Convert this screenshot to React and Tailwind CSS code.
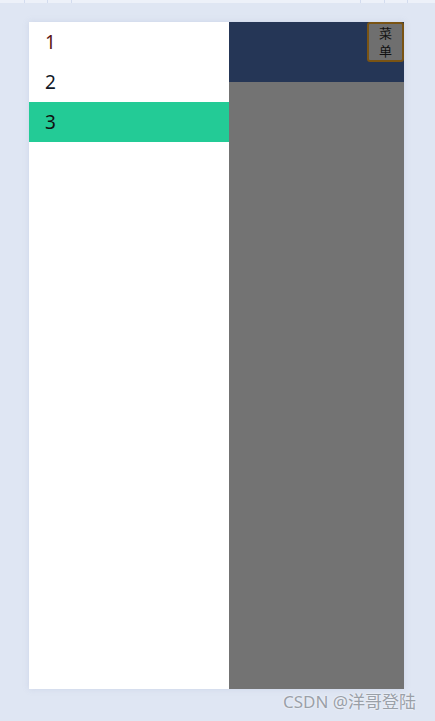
import React, { useState } from 'react';

const items = [
    { id: 1, label: '1', color: 'text-[#5c1414]' },
    { id: 2, label: '2', color: 'text-[#111827]' },
    { id: 3, label: '3', color: 'text-[#111111]' },
];

const App = () => {
    const [active, setActive] = useState(3);

    return (
        <div className="relative min-h-[721px] w-full bg-[#dfe6f3] font-['Noto_Sans','Noto_Sans_CJK_SC',sans-serif]">
            {/* top strip */}
            <div className="flex h-[3px] bg-[#edf1f9]">
                <div className="w-[25px] border-r border-[#d3dcef]" />
                <div className="w-[23px] border-r border-[#d3dcef]" />
                <div className="w-[24px] border-r border-[#d3dcef]" />
                <div className="flex-1 border-r border-[#d3dcef]" />
                <div className="w-[24px] border-r border-[#d3dcef]" />
                <div className="w-[23px] border-r border-[#d3dcef]" />
                <div className="w-[27px]" />
            </div>

            <div className="pl-[29px] pt-[19px]">
                <div className="flex h-[667px] w-[375px] shadow-[0_0_6px_rgba(150,165,200,0.25)]">
                    <div className="w-[200px] bg-white">
                        {items.map(item => (
                            <div
                                key={item.id}
                                onClick={() => setActive(item.id)}
                                className={`flex h-[40px] items-center pl-[16px] text-[19px] ${item.color} ${active === item.id ? 'bg-[#23cb96]' : ''}`}
                            >
                                {item.label}
                            </div>
                        ))}
                    </div>
                    <div className="flex w-[175px] flex-col">
                        <div className="flex h-[60px] justify-end bg-[#253656]">
                            <button className="flex h-[40px] w-[37px] flex-col items-center justify-center rounded-[3px] border-2 border-[#7a5414] bg-[#6f6f6f] text-[13px] leading-[18px] text-[#111]">
                                <span className="block h-[18px]">菜</span>
                                <span className="block h-[18px]">单</span>
                            </button>
                        </div>
                        <div className="flex-1 bg-[#737373]" />
                    </div>
                </div>
            </div>

            <div className="absolute left-[283px] top-[690px] text-[17px] leading-[24px] text-[#9aa0a8] [text-shadow:0_0_2px_#fff]">
                CSDN @洋哥登陆
            </div>
        </div>
    );
};

export default App;
